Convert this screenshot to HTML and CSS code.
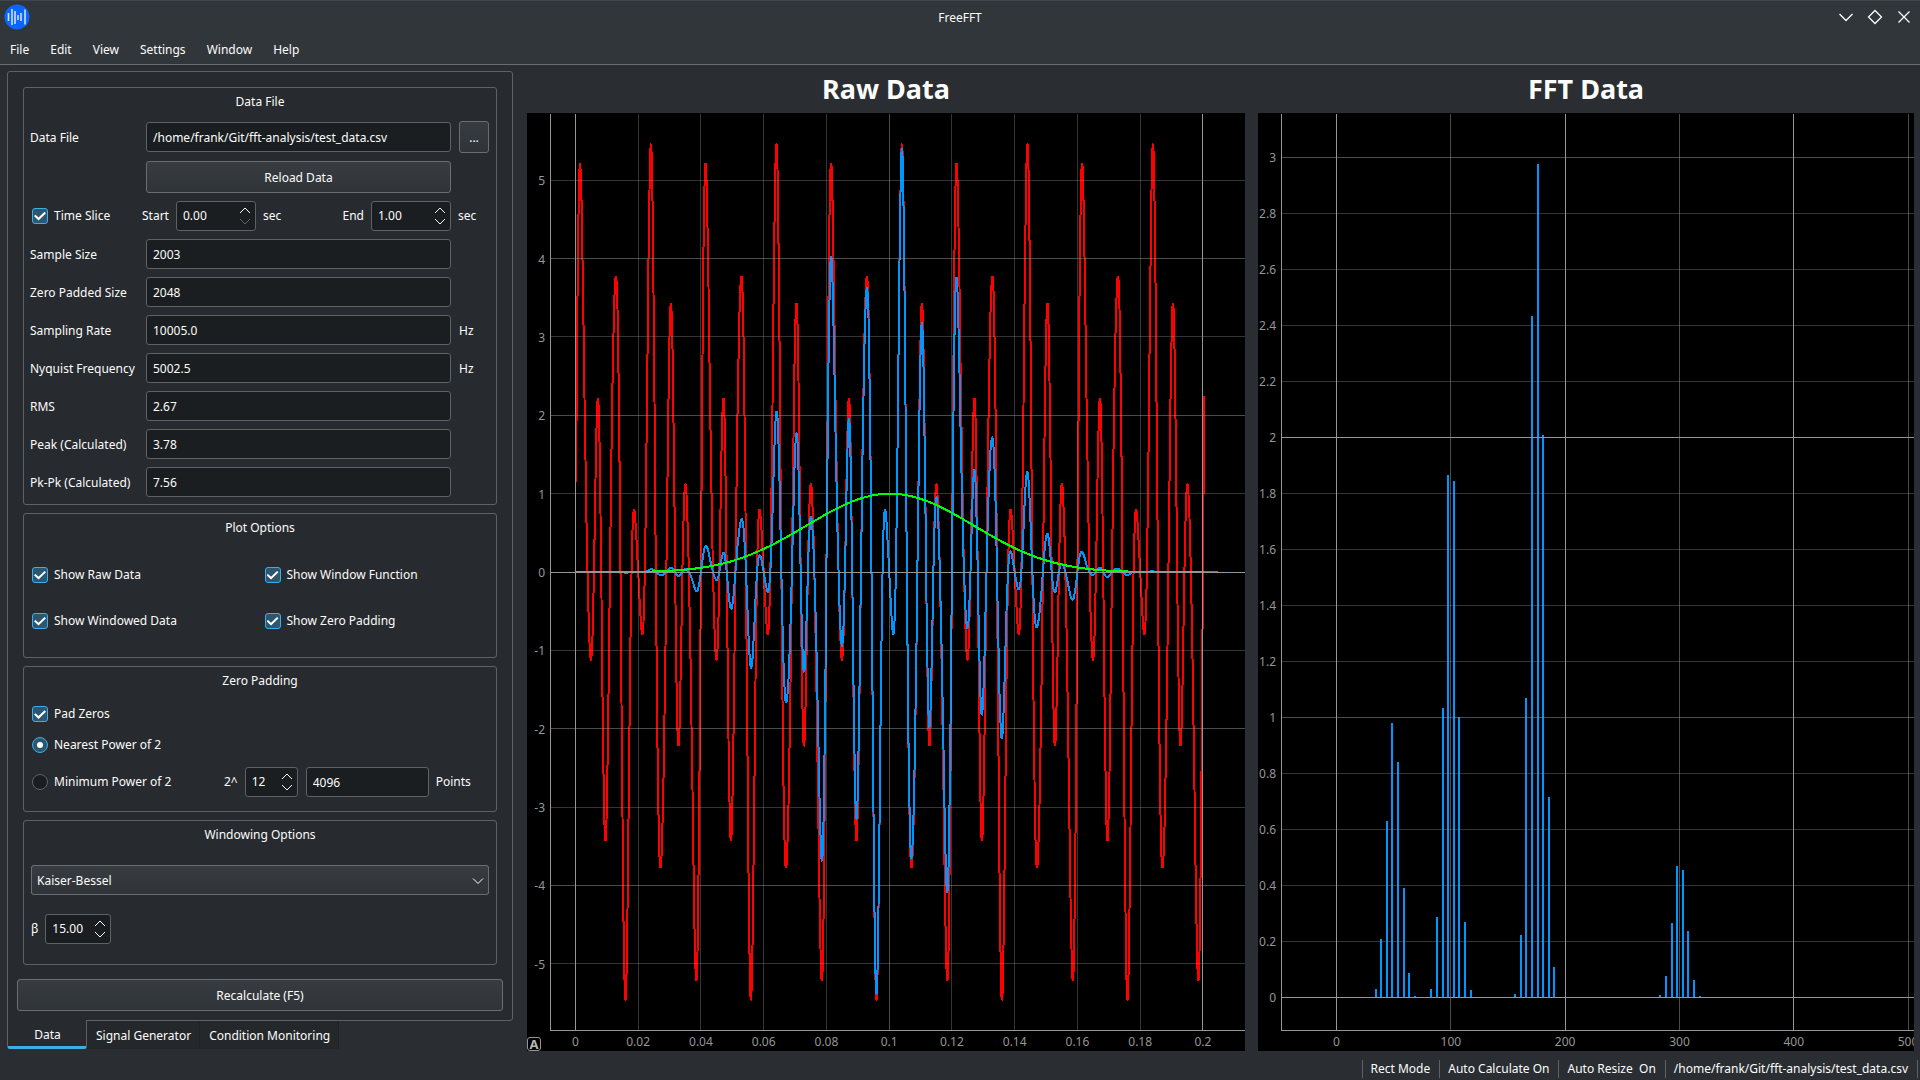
FILE: index.html
```
<!DOCTYPE html>
<html lang="en">
<head>
    <meta charset="UTF-8">
    <meta name="viewport" content="width=device-width, initial-scale=1.0">
    <title>FreeFFT</title>
    <link rel="stylesheet" href="styles.css">
</head>
<body>
    <header class="window-head">
        <div class="title-bar">
            <svg class="app-icon" viewBox="0 0 26 26" aria-hidden="true">
                <circle cx="13" cy="13" r="12.5"/>
                <path d="M4.5 9v8M8 5v16M11 7v13M14 11v5M17 9v8M21 5.5v15"/>
            </svg>
            <h1>FreeFFT</h1>
            <div class="window-buttons">
                <button aria-label="Minimize"><svg viewBox="0 0 16 16"><path d="M1.500 5l6.500 6.500l6.500-6.500"/></svg></button>
                <button aria-label="Maximize"><svg viewBox="0 0 16 16"><path d="M8 1.500l6.500 6.500l-6.500 6.500l-6.500-6.500z"/></svg></button>
                <button aria-label="Close"><svg viewBox="0 0 16 16"><path d="M2.500 2.500l11 11M13.500 2.500l-11 11"/></svg></button>
            </div>
        </div>
        <nav class="menu-bar">
            <button>File</button>
            <button>Edit</button>
            <button>View</button>
            <button>Settings</button>
            <button>Window</button>
            <button>Help</button>
        </nav>
    </header>

    <main>
        <div class="sidebar">
            <form class="panel">
                <div class="groups">
                    <section class="group data-file">
                        <h2>Data File</h2>
                        <div class="fields">
                            <label for="file">Data File</label>
                            <input type="text" id="file" value="/home/frank/Git/fft-analysis/test_data.csv">
                            <button type="button" class="btn browse">...</button>

                            <button type="button" class="btn reload">Reload Data</button>

                            <div class="time-slice">
                                <label class="check slice"><input type="checkbox" checked>Time Slice</label>
                                <label for="start">Start</label>
                                <span class="spin">
                                    <input type="number" id="start" value="0.00" step="0.01" min="0">
                                    <svg viewBox="0 0 12 18"><path d="M1 6l5-5l5 5"/><path class="off" d="M1 12l5 5l5-5"/></svg>
                                </span>
                                <span>sec</span>
                                <label for="end" class="push">End</label>
                                <span class="spin">
                                    <input type="number" id="end" value="1.00" step="0.01" min="0">
                                    <svg viewBox="0 0 12 18"><path d="M1 6l5-5l5 5M1 12l5 5l5-5"/></svg>
                                </span>
                                <span class="unit">sec</span>
                            </div>

                            <label for="samples">Sample Size</label>
                            <input type="text" id="samples" value="2003" readonly>
                            <span></span>
                            <label for="padded">Zero Padded Size</label>
                            <input type="text" id="padded" value="2048" readonly>
                            <span></span>
                            <label for="rate">Sampling Rate</label>
                            <input type="text" id="rate" value="10005.0" readonly>
                            <span>Hz</span>
                            <label for="nyquist">Nyquist Frequency</label>
                            <input type="text" id="nyquist" value="5002.5" readonly>
                            <span>Hz</span>
                            <label for="rms">RMS</label>
                            <input type="text" id="rms" value="2.67" readonly>
                            <span></span>
                            <label for="peak">Peak (Calculated)</label>
                            <input type="text" id="peak" value="3.78" readonly>
                            <span></span>
                            <label for="pkpk">Pk-Pk (Calculated)</label>
                            <input type="text" id="pkpk" value="7.56" readonly>
                            <span></span>
                        </div>
                    </section>

                    <section class="group">
                        <h2>Plot Options</h2>
                        <div class="options plot-options">
                            <label class="check"><input type="checkbox" checked>Show Raw Data</label>
                            <label class="check"><input type="checkbox" checked>Show Window Function</label>
                            <label class="check"><input type="checkbox" checked>Show Windowed Data</label>
                            <label class="check"><input type="checkbox" checked>Show Zero Padding</label>
                        </div>
                    </section>

                    <section class="group">
                        <h2>Zero Padding</h2>
                        <div class="options padding-options">
                            <label class="check"><input type="checkbox" checked>Pad Zeros</label>
                            <label class="check"><input type="radio" name="power" checked>Nearest Power of 2</label>
                            <div class="row">
                                <label class="check min-power"><input type="radio" name="power">Minimum Power of 2</label>
                                <label for="power">2^</label>
                                <span class="spin spin-small">
                                    <input type="number" id="power" value="12">
                                    <svg viewBox="0 0 12 18"><path d="M1 6l5-5l5 5M1 12l5 5l5-5"/></svg>
                                </span>
                                <input type="text" id="points" class="points" value="4096" readonly>
                                <label for="points">Points</label>
                            </div>
                        </div>
                    </section>

                    <section class="group">
                        <h2>Windowing Options</h2>
                        <div class="options window-options">
                            <div class="select">
                                <select aria-label="Window function">
                                    <option>Kaiser-Bessel</option>
                                </select>
                                <svg viewBox="0 0 12 8"><path d="M1 1.500l5 5l5-5"/></svg>
                            </div>
                            <div class="row">
                                <label for="beta">β</label>
                                <span class="spin spin-medium">
                                    <input type="number" id="beta" value="15.00" step="0.01">
                                    <svg viewBox="0 0 12 18"><path d="M1 6l5-5l5 5M1 12l5 5l5-5"/></svg>
                                </span>
                            </div>
                        </div>
                    </section>
                </div>
                <button type="button" class="btn">Recalculate (F5)</button>
            </form>
            <div class="tabs">
                <button class="tab active">Data</button>
                <button class="tab">Signal Generator</button>
                <button class="tab">Condition Monitoring</button>
            </div>
        </div>

        <section class="plot">
            <h2>Raw Data</h2>
            <div class="canvas">
                <svg id="raw-plot"></svg>
                <button class="auto-range">A</button>
            </div>
        </section>

        <section class="plot">
            <h2>FFT Data</h2>
            <div class="canvas">
                <svg id="fft-plot"></svg>
            </div>
        </section>
    </main>

    <footer>
        <span>Rect Mode</span>
        <span>Auto Calculate On</span>
        <span>Auto Resize  On</span>
        <span>/home/frank/Git/fft-analysis/test_data.csv</span>
    </footer>

    <script src="plots.js"></script>
</body>
</html>
```
FILE: styles.css
```
* {
    box-sizing: border-box;
    padding: 0;
    margin: 0;
}

:root {
    --bg: #2a2e32;
    --bg-head: #31363a;
    --bg-panel: #272a2e;
    --bg-input: #1b1e20;
    --border: #5f6265;
    --text: #fcfcfc;
    --accent: #3daee9;
    --accent-bg: #2d5670;
}

body {
    min-height: 100vh;
    display: flex;
    flex-direction: column;
    background-color: var(--bg);
    color: var(--text);
    font: 12px/18px "Noto Sans", sans-serif;
}

button, input, select {
    font: inherit;
    color: inherit;
}

button {
    background: none;
    border: none;
}

h1, h2 {
    font-size: 12px;
    font-weight: normal;
    text-align: center;
}

svg {
    display: block;
    fill: none;
    stroke: var(--text);
}

/* window title and menus */
.window-head {
    height: 65px;
    background-color: var(--bg-head);
    border-top: 1px solid #40464f;
    border-bottom: 1px solid #6b6e70;
}

.title-bar {
    height: 32px;
    display: grid;
    grid-template-columns: 1fr auto 1fr;
    align-items: center;
    padding: 0 4px;
}

.title-bar h1 {
    padding-top: 2px;
}

.app-icon {
    width: 26px;
    height: 26px;
    stroke: #cfe0ff;
    stroke-width: 1.6;
}

.app-icon circle {
    fill: #0a66ff;
    stroke: none;
}

.window-buttons {
    display: flex;
    justify-content: flex-end;
    gap: 13px;
    padding-right: 4px;
}

.window-buttons svg {
    width: 16px;
    height: 16px;
    stroke-width: 1.3;
}

.menu-bar {
    display: flex;
    gap: 21px;
    padding: 8px 10px 0;
}

main {
    flex: 1;
    display: grid;
    grid-template-columns: 507fr 718fr 656fr;
    gap: 13px;
    padding: 6px 6px 0 7px;
}

.sidebar {
    display: flex;
    flex-direction: column;
    padding: 0 1px 2px 0;
}

.panel {
    flex: 1;
    display: flex;
    flex-direction: column;
    gap: 14px;
    padding: 9px;
    background-color: var(--bg-panel);
    border: 1px solid var(--border);
    border-radius: 3px 3px 3px 0;
}

.groups {
    flex: 1;
    display: flex;
    flex-direction: column;
    gap: 8px;
    padding: 6px 6px 0;
}

.group {
    flex: 1;
    display: flex;
    flex-direction: column;
    padding: 5px 7px 7px;
    border: 1px solid var(--border);
    border-radius: 3px;
}

.data-file {
    flex: none;
}

/* form controls */
input[type=text], .spin {
    width: 100%;
    height: 30px;
    padding: 0 6px;
    background-color: var(--bg-input);
    border: 1px solid var(--border);
    border-radius: 3px;
}

.btn, select {
    width: 100%;
    height: 32px;
    padding-top: 1px;
    background-image: linear-gradient(#383c41, #2f3438);
    border: 1px solid #6b6e71;
    border-radius: 3px;
}

.spin {
    display: flex;
    align-items: center;
    flex: none;
    width: 80px;
}

.spin input {
    flex: 1;
    min-width: 0;
    border: none;
    background: none;
    appearance: textfield;
}

.spin input::-webkit-inner-spin-button {
    display: none;
}

.spin svg {
    width: 12px;
    height: 18px;
    margin-right: -2px;
}

.spin .off {
    stroke: #5f6265;
}

.spin-small {
    width: 53px;
}

.spin-medium {
    width: 66px;
}

.check {
    display: flex;
    align-items: center;
    gap: 6px;
}

.check input {
    appearance: none;
    display: grid;
    place-content: center;
    width: 16px;
    height: 16px;
    background-color: var(--bg-input);
    border: 1px solid var(--border);
    border-radius: 3px;
}

.check input:checked {
    background-color: var(--accent-bg);
    border-color: var(--accent);
}

.check input[type=checkbox]:checked::after {
    content: "";
    width: 12px;
    height: 10px;
    background-color: white;
    clip-path: polygon(0 50%, 12% 38%, 38% 66%, 88% 8%, 100% 22%, 38% 94%);
}

.check input[type=radio] {
    border-radius: 50%;
}

.check input[type=radio]:checked::after {
    content: "";
    width: 6px;
    height: 6px;
    border-radius: 50%;
    background-color: white;
}

.fields {
    display: grid;
    grid-template-columns: 108px 1fr 30px;
    gap: 8px;
    align-items: center;
    margin: 10px 0 0 -1px;
}

.fields > label, .fields > span {
    padding-top: 1px;
    white-space: nowrap;
}

.reload {
    grid-column: 2;
}

.time-slice {
    grid-column: 1 / -1;
    display: flex;
    align-items: center;
    gap: 7px;
    padding-left: 2px;
}

.slice {
    width: 103px;
}

.push {
    margin-left: auto;
}

.time-slice .unit {
    width: 31px;
}

.options {
    flex: 1;
    display: flex;
    flex-direction: column;
    justify-content: center;
    padding-top: 9px;
}

.plot-options {
    display: grid;
    grid-template-columns: 1fr 1fr;
    justify-content: normal;
    align-content: center;
    gap: 28px 8px;
    padding-left: 1px;
}

.padding-options {
    gap: 13px;
    padding-left: 1px;
}

.window-options {
    gap: 19px;
}

.row {
    display: flex;
    align-items: center;
    gap: 7px;
}

.min-power {
    width: 185px;
}

.row .points {
    width: 123px;
    margin-left: 1px;
}

.select {
    position: relative;
}

select {
    appearance: none;
    display: block;
    height: 30px;
    padding: 1px 5px 0;
}

.select svg {
    position: absolute;
    right: 5px;
    top: 12px;
    width: 12px;
    height: 8px;
}

/* tabs hang below the panel */
.tabs {
    display: flex;
}

.tab {
    height: 28px;
    padding: 1px 8px 0 9px;
    background-color: #25282b;
    border-right: 1px solid #202326;
}

.tab.active {
    width: 80px;
    height: 29px;
    margin-top: -1px;
    padding-top: 4px;
    background-color: var(--bg-panel);
    border-left: 1px solid var(--border);
    border-right: 1px solid var(--border);
    border-bottom: 3px solid var(--accent);
    border-radius: 0 0 3px 3px;
}

/* plots */
.plot {
    display: flex;
    flex-direction: column;
    min-width: 0;
}

.plot > h2 {
    padding-bottom: 6px;
    font-size: 27px;
    line-height: 36px;
    font-weight: bold;
}

.canvas {
    flex: 1;
    position: relative;
    background-color: black;
}

.canvas svg {
    position: absolute;
    width: 100%;
    height: 100%;
    stroke: none;
    shape-rendering: crispEdges;
}

.canvas text {
    fill: #969696;
    font-size: 12px;
}

.grid {
    stroke: #969696;
}

.trace {
    stroke-width: 2;
    stroke-linejoin: bevel;
}

.raw {
    stroke: #f00;
}

.windowed {
    stroke: #0096ff;
}

.window {
    stroke: #0f0;
}

.auto-range {
    position: absolute;
    left: 0;
    bottom: 0;
    width: 14px;
    height: 14px;
    border: 1px solid #969696;
    border-radius: 3px;
    color: #b4b4b4;
    font-size: 13px;
    font-weight: bold;
    line-height: 12px;
}

footer {
    display: flex;
    justify-content: flex-end;
    align-items: center;
    height: 29px;
    padding: 7px 2px 0 0;
}

footer span {
    padding: 0 9px 0 8px;
    border-left: 1px solid var(--border);
    white-space: pre;
}

footer span:last-child {
    border-right: 1px solid var(--border);
}
```
FILE: plots.js
```
const RATE = 10005;
const STEP = 0.0001;
const SAMPLES = 2003;
const PADDED = 2048;
const BETA = 15;
const AXIS_BOTTOM = 21;

// [frequency, amplitude]
const tones = [[50, 1], [100, 2], [175, 3], [300, 0.5]];

// first FFT bin of each peak, then the bin heights
const peaks = [
    [7, [0.03, 0.21, 0.63, 0.98, 0.84, 0.39, 0.088, 0.005]],
    [17, [0.03, 0.288, 1.035, 1.867, 1.845, 1, 0.27, 0.027]],
    [32, [0.013, 0.224, 1.07, 2.434, 2.977, 2.01, 0.714, 0.11]],
    [58, [0.009, 0.078, 0.267, 0.47, 0.455, 0.238, 0.063, 0.005]]
];

function signal(t) {
    return tones.reduce((sum, [f, a]) => sum + a * Math.sin(2 * Math.PI * f * t), 0);
}

// modified Bessel function of order zero
function bessel(x) {
    let sum = 1;
    let term = 1;
    for (let k = 1; k < 50; k++) {
        term *= (x / 2 / k) ** 2;
        sum += term;
    }
    return sum;
}

function kaiser(n) {
    const u = 2 * n / (SAMPLES - 1) - 1;
    return bessel(BETA * Math.sqrt(Math.max(0, 1 - u * u))) / bessel(BETA);
}

function add(svg, name, attrs, text) {
    const el = document.createElementNS("http://www.w3.org/2000/svg", name);
    for (const key in attrs) {
        el.setAttribute(key, attrs[key]);
    }
    if (text !== undefined) {
        el.textContent = text;
    }
    svg.append(el);
}

function scales(svg, view) {
    const w = svg.clientWidth;
    const h = svg.clientHeight;
    const bottom = h - AXIS_BOTTOM;
    return {
        w, h, bottom,
        x: v => view.left + (v - view.x0) / (view.x1 - view.x0) * (w - view.left),
        y: v => bottom - (v - view.y0) / (view.y1 - view.y0) * (bottom - 1)
    };
}

function drawGrid(svg, view, s) {
    const vline = (x, o) => add(svg, "path", { class: "grid", opacity: o, d: `M${Math.floor(x) + 0.5} 1V${s.bottom}` });
    const hline = (y, o) => add(svg, "path", { class: "grid", opacity: o, d: `M${view.left} ${Math.floor(y) + 0.5}H${s.w}` });
    for (const [v, o] of view.xTicks) {
        vline(s.x(v), o);
        add(svg, "text", { x: s.x(v), y: s.bottom + 16, "text-anchor": "middle" }, v);
    }
    for (const [v, o] of view.yTicks) {
        hline(s.y(v), o);
        add(svg, "text", { x: view.left - 5, y: s.y(v) + 5, "text-anchor": "end" }, v);
    }
    vline(view.left, 1);
    hline(s.bottom, 1);
}

// evenly spaced ticks; strength gives the grid line opacity for a tick index
function ticks(from, to, step, strength) {
    const list = [];
    for (let i = from; i <= to; i++) {
        list.push([+(i * step).toFixed(2), strength(i)]);
    }
    return list;
}

const rawView = {
    left: 23, x0: -0.0081, x1: 0.2134, y0: -5.845, y1: 5.845,
    xTicks: ticks(0, 10, 0.02, i => i % 10 === 0 ? 1 : i === 5 ? 0.5 : 0.35),
    yTicks: ticks(-5, 5, 1, i => i === 0 ? 1 : i % 2 === 0 ? 0.5 : 0.35)
};

const fftView = {
    left: 23, x0: -48.6, x1: 505.2, y0: -0.1164, y1: 3.155,
    xTicks: ticks(0, 5, 100, i => i % 2 === 0 ? 1 : 0.5),
    yTicks: ticks(0, 15, 0.2, i => i % 10 === 0 ? 1 : i % 5 === 0 ? 0.5 : 0.35)
};

function drawRaw() {
    const svg = document.getElementById("raw-plot");
    svg.replaceChildren();
    const s = scales(svg, rawView);
    const raw = [];
    const windowed = [];
    const win = [];
    for (let n = 0; n < PADDED; n++) {
        const t = (n + 2) * STEP;
        const x = s.x(t).toFixed(1);
        if (n < SAMPLES) {
            raw.push(x + "," + s.y(signal(t)).toFixed(1));
            win.push(x + "," + s.y(kaiser(n)).toFixed(1));
        }
        const v = n < SAMPLES ? signal(t) * kaiser(n) : 0;
        windowed.push(x + "," + s.y(v).toFixed(1));
    }
    add(svg, "polyline", { class: "trace raw", points: raw.join(" ") });
    add(svg, "polyline", { class: "trace windowed", points: windowed.join(" ") });
    add(svg, "polyline", { class: "trace window", points: win.join(" ") });
    drawGrid(svg, rawView, s);
}

function drawFft() {
    const svg = document.getElementById("fft-plot");
    svg.replaceChildren();
    const s = scales(svg, fftView);
    for (const [first, heights] of peaks) {
        heights.forEach((v, i) => {
            const x = Math.round(s.x((first + i) * RATE / PADDED));
            add(svg, "path", { class: "trace windowed", d: `M${x} ${s.y(0)}V${s.y(v)}` });
        });
    }
    drawGrid(svg, fftView, s);
}

function draw() {
    drawRaw();
    drawFft();
}

window.addEventListener("resize", draw);
draw();
```
